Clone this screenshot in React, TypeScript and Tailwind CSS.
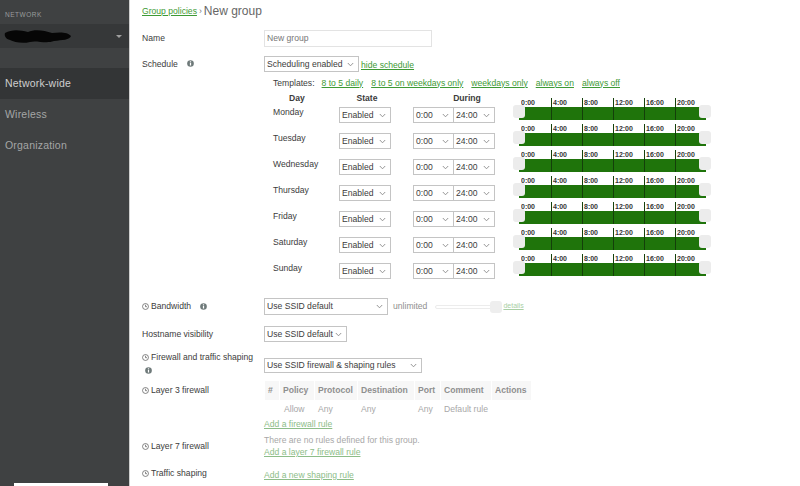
import React from "react";

const Chevron = () => (
  <svg width="7" height="5" viewBox="0 0 7 5" className="shrink-0" fill="none" stroke="#8a8a8a" strokeWidth="0.9">
    <path d="M0.8 1L3.5 3.8L6.2 1" />
  </svg>
);

const Sel = ({ text, className }: { text: string; className: string }) => (
  <div className={`flex items-center justify-between pl-[2px] pr-[4px] bg-white border border-[#c4c4c4] text-[8.6px] text-[#3c3c3c] shrink-0 ${className}`}>
    <span className="whitespace-nowrap">{text}</span>
    <Chevron />
  </div>
);

const Info = () => (
  <svg width="7" height="7" viewBox="0 0 8 8" className="inline-block shrink-0">
    <circle cx="4" cy="4" r="3.8" fill="#6f7a7a" />
    <rect x="3.3" y="3.3" width="1.4" height="3" fill="#fff" />
    <rect x="3.3" y="1.5" width="1.4" height="1.2" fill="#fff" />
  </svg>
);

const Clock = () => (
  <svg width="7" height="7" viewBox="0 0 8 8" className="inline-block shrink-0" fill="none" stroke="#555" strokeWidth="0.8">
    <circle cx="4" cy="4" r="3.4" />
    <path d="M4 2V4.2H5.8" />
  </svg>
);

const Slider = () => (
  <div className="relative w-[198px] h-[22px] ml-[18px] mt-[-3px] shrink-0">
    <div className="absolute left-[6px] top-[9px] w-[187px] h-[13px] bg-[#1f740b]" />
    <div className="absolute left-[7px] top-0 flex h-[22px] opacity-99">
      {["0:00", "4:00", "8:00", "12:00", "16:00", "20:00"].map((t, i) => (
        <div
          key={t}
          className={`w-[31px] h-[22px] text-[7px] leading-[9px] font-semibold text-[#333] pl-[1px] ${i > 0 ? "border-l border-[#143f0a]" : ""}`}
        >
          {t}
        </div>
      ))}
    </div>
    <div className="absolute left-0 top-[7px] w-[12px] h-[13px] rounded-[3px] bg-[#ececec]" />
    <div className="absolute left-[186px] top-[7px] w-[12px] h-[13px] rounded-[3px] bg-[#ececec]" />
  </div>
);

const days = ["Monday", "Tuesday", "Wednesday", "Thursday", "Friday", "Saturday", "Sunday"];

const Link = ({ children, className = "text-[#3e9a35]" }: { children: React.ReactNode; className?: string }) => (
  <span className={`underline whitespace-nowrap ${className}`}>{children}</span>
);

const Th = ({ w, children }: { w: string; children: React.ReactNode }) => (
  <div className={`${w} h-[19px] bg-[#f7f7f7] flex items-center pl-[3px] font-semibold text-[#8f8f8f] text-[8.6px] whitespace-nowrap shrink-0`}>
    {children}
  </div>
);

export default function App() {
  return (
    <div className="flex w-[800px] h-[486px] overflow-hidden bg-white font-['Liberation_Sans',Arial,sans-serif] text-[8.6px] text-[#3c3c3c]">
      <aside className="w-[130px] shrink-0 h-full bg-[#3f4142] border-r border-[#cfcfcf] flex flex-col relative">
        <div className="h-[24px] pl-[5px] pt-[10px] text-[6.5px] tracking-[0.5px] text-[#9a9c9c] leading-[9px]">NETWORK</div>
        <div className="h-[24px] bg-[#363839] flex items-center justify-between pl-[4px] pr-[7px]">
          <svg width="68" height="17" viewBox="0 0 68 17">
            <path d="M1 5C8 1 16 2 24 4C30 1 40 2 48 5C56 4 64 4 67 8C66 12 58 12 50 13C42 16 32 12 26 14C18 16 10 14 6 12C2 11 0 8 1 5Z" fill="#060606" />
          </svg>
          <div className="w-0 h-0 border-x-[3px] border-x-transparent border-t-[3px] border-t-[#a0a0a0]" />
        </div>
        <div className="mt-[20px] h-[31px] bg-[#333536] flex items-center pl-[5px] text-[10.5px] tracking-[0.2px] text-[#cfcfcf]">Network-wide</div>
        <div className="h-[31px] flex items-center pl-[5px] text-[10.5px] tracking-[0.2px] text-[#a4a6a6]">Wireless</div>
        <div className="h-[31px] flex items-center pl-[5px] text-[10.5px] tracking-[0.2px] text-[#a4a6a6]">Organization</div>
        <div className="absolute left-[14px] bottom-0 w-[94px] h-[3px] bg-white" />
      </aside>

      <main className="flex-1 pl-[12px] flex flex-col min-w-0">
        <div className="h-[22px] flex items-center gap-[2px]">
          <Link>Group policies</Link>
          <span className="text-[#777]">›</span>
          <span className="text-[12px] text-[#666]">New group</span>
        </div>

        <div className="mt-[8px] flex items-center h-[17px]">
          <div className="w-[122px] shrink-0">Name</div>
          <div className="w-[168px] h-[17px] border border-[#e3e3e3] flex items-center pl-[2px] text-[#777]">New group</div>
        </div>

        <div className="mt-[9px] flex items-center h-[16px]">
          <div className="w-[122px] shrink-0 flex items-center gap-[9px]">Schedule <Info /></div>
          <Sel text="Scheduling enabled" className="w-[95px] h-[16px]" />
          <Link className="text-[#3e9a35] ml-[2px] mt-[3px]">hide schedule</Link>
        </div>

        <div className="mt-[3px] ml-[131px] flex items-center h-[16px] gap-[8px]">
          <span className="mr-[-1px]">Templates:</span>
          <Link>8 to 5 daily</Link>
          <Link>8 to 5 on weekdays only</Link>
          <Link>weekdays only</Link>
          <Link>always on</Link>
          <Link>always off</Link>
        </div>

        <div className="mt-[2px] ml-[131px] flex h-[10px] font-bold text-[#3c3c3c] leading-[10px]">
          <div className="w-[48px] text-center">Day</div>
          <div className="w-[92px] text-center">State</div>
          <div className="w-[108px] text-center">During</div>
        </div>

        <div className="flex flex-col ml-[131px] mt-[-2px]">
          {days.map((d) => (
            <div key={d} className="flex items-start h-[26px]">
              <div className="w-[66px] shrink-0 mt-[5px] leading-[12px]">{d}</div>
              <Sel text="Enabled" className="w-[52px] h-[16px] mt-[6px]" />
              <div className="flex ml-[22px] mt-[6px]">
                <Sel text="0:00" className="w-[41px] h-[16px]" />
                <Sel text="24:00" className="w-[42px] h-[16px] ml-[-1px]" />
              </div>
              <Slider />
            </div>
          ))}
        </div>

        <div className="mt-[15px] flex items-center h-[17px]">
          <div className="w-[122px] shrink-0 flex items-center"><Clock /><span className="ml-[2px]">Bandwidth</span><span className="ml-[9px] flex"><Info /></span></div>
          <Sel text="Use SSID default" className="w-[124px] h-[17px]" />
          <span className="ml-[5px] text-[#8f8f8f]">unlimited</span>
          <div className="relative ml-[8px] w-[68px] h-[12px] flex items-center">
            <div className="w-[60px] h-[4px] rounded-full border border-[#ececec]" />
            <div className="absolute left-[55px] top-0 w-[12px] h-[12px] rounded-[3px] bg-[#eeeeee]" />
          </div>
          <Link className="text-[7px] text-[#a9cfa5]">details</Link>
        </div>

        <div className="mt-[11px] flex items-center h-[16px]">
          <div className="w-[122px] shrink-0">Hostname visibility</div>
          <Sel text="Use SSID default" className="w-[83px] h-[16px]" />
        </div>

        <div className="mt-[9px] flex h-[24px]">
          <div className="w-[122px] shrink-0 leading-[13px]">
            <div className="flex items-center gap-[2px]"><Clock /><span>Firewall and traffic shaping</span></div>
            <div className="pl-[3px] flex items-center h-[13px]"><Info /></div>
          </div>
          <Sel text="Use SSID firewall & shaping rules" className="w-[158px] h-[15px] mt-[7px]" />
        </div>

        <div className="flex mt-[6px]">
          <div className="w-[122px] shrink-0 flex items-center self-start h-[19px] gap-[2px]"><Clock /><span>Layer 3 firewall</span></div>
          <div className="flex flex-col">
            <div className="flex gap-[1px]">
              <Th w="w-[14px] ml-[1px]">#</Th>
              <Th w="w-[34px]">Policy</Th>
              <Th w="w-[42px]">Protocol</Th>
              <Th w="w-[56px]">Destination</Th>
              <Th w="w-[25px]">Port</Th>
              <Th w="w-[50px]">Comment</Th>
              <Th w="w-[39px]">Actions</Th>
            </div>
            <div className="flex gap-[1px] text-[#a8a8a8] h-[16px] items-center mt-[1px]">
              <div className="w-[15px]" />
              <div className="w-[34px] pl-[4px]">Allow</div>
              <div className="w-[42px] pl-[3px]">Any</div>
              <div className="w-[56px] pl-[3px]">Any</div>
              <div className="w-[25px] pl-[3px]">Any</div>
              <div className="w-[89px] pl-[3px]">Default rule</div>
            </div>
            <Link className="leading-[14px] text-[#8dbd88]">Add a firewall rule</Link>
          </div>
        </div>

        <div className="flex mt-[3px]">
          <div className="w-[122px] shrink-0 flex items-center gap-[2px]"><Clock /><span>Layer 7 firewall</span></div>
          <div className="flex flex-col leading-[12px]">
            <span className="text-[#a8a8a8]">There are no rules defined for this group.</span>
            <Link className="text-[#8dbd88]">Add a layer 7 firewall rule</Link>
          </div>
        </div>

        <div className="flex mt-[10px] h-[14px] items-center">
          <div className="w-[122px] shrink-0 flex items-center gap-[2px] mt-[-3px]"><Clock /><span>Traffic shaping</span></div>
          <Link className="text-[#8dbd88]">Add a new shaping rule</Link>
        </div>
      </main>
    </div>
  );
}
